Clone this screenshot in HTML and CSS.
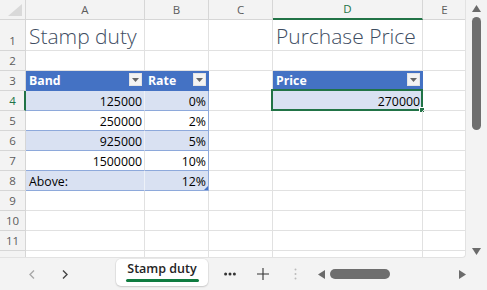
FILE: index.html
```html
<!DOCTYPE html>
<html>
<head>
<meta charset="utf-8">
<link rel="stylesheet" href="styles.css">
</head>
<body>
<div class="app">
  <div class="main">
    <div class="sheet">
      <div class="grid">
        <div class="c h corner"><svg width="14" height="12" viewBox="0 0 14 12"><polygon points="14,0 14,12 0,12" fill="#d9d9d9"/></svg></div>
        <div class="c h">A</div>
        <div class="c h">B</div>
        <div class="c h">C</div>
        <div class="c h sel-col">D</div>
        <div class="c h">E</div>

        <div class="c rh">1</div>
        <div class="c title">Stamp duty</div>
        <div class="c"></div>
        <div class="c"></div>
        <div class="c title">Purchase Price</div>
        <div class="c"></div>

        <div class="c rh">2</div>
        <div class="c"></div><div class="c"></div><div class="c"></div><div class="c"></div><div class="c"></div>

        <div class="c rh">3</div>
        <div class="c th">Band<span class="dd"><svg width="7" height="4" viewBox="0 0 7 4"><polygon points="0,0 7,0 3.5,4" fill="#666"/></svg></span></div>
        <div class="c th">Rate<span class="dd"><svg width="7" height="4" viewBox="0 0 7 4"><polygon points="0,0 7,0 3.5,4" fill="#666"/></svg></span></div>
        <div class="c"></div>
        <div class="c th">Price<span class="dd"><svg width="7" height="4" viewBox="0 0 7 4"><polygon points="0,0 7,0 3.5,4" fill="#666"/></svg></span></div>
        <div class="c"></div>

        <div class="c rh sel-row">4</div>
        <div class="c td band tA num">125000</div>
        <div class="c td band tB num">0%</div>
        <div class="c"></div>
        <div class="c td band tB num">270000<span class="selbox"><span class="handle"></span></span></div>
        <div class="c"></div>

        <div class="c rh">5</div>
        <div class="c td tA num">250000</div>
        <div class="c td tB num">2%</div>
        <div class="c"></div><div class="c"></div><div class="c"></div>

        <div class="c rh">6</div>
        <div class="c td band tA num">925000</div>
        <div class="c td band tB num">5%</div>
        <div class="c"></div><div class="c"></div><div class="c"></div>

        <div class="c rh">7</div>
        <div class="c td tA num">1500000</div>
        <div class="c td tB num">10%</div>
        <div class="c"></div><div class="c"></div><div class="c"></div>

        <div class="c rh">8</div>
        <div class="c td band tA">Above:</div>
        <div class="c td band tB num">12%<span class="resize"></span></div>
        <div class="c"></div><div class="c"></div><div class="c"></div>

        <div class="c rh">9</div>
        <div class="c"></div><div class="c"></div><div class="c"></div><div class="c"></div><div class="c"></div>
        <div class="c rh">10</div>
        <div class="c"></div><div class="c"></div><div class="c"></div><div class="c"></div><div class="c"></div>
        <div class="c rh">11</div>
        <div class="c"></div><div class="c"></div><div class="c"></div><div class="c"></div><div class="c"></div>
        <div class="c rh">12</div>
        <div class="c"></div><div class="c"></div><div class="c"></div><div class="c"></div><div class="c"></div>
      </div>
    </div>
    <div class="vscroll">
      <svg class="vup" width="9" height="7" viewBox="0 0 9 7"><polygon points="4.5,0 9,7 0,7" fill="#6b6b6b"/></svg>
      <div class="vthumb"></div>
      <svg class="vdown" width="9" height="7" viewBox="0 0 9 7"><polygon points="0,0 9,0 4.5,7" fill="#6b6b6b"/></svg>
    </div>
  </div>
  <div class="tabbar">
    <svg class="chev-l" width="6" height="9" viewBox="0 0 6 9"><polyline points="5,0.5 1,4.5 5,8.5" fill="none" stroke="#a8a8a8" stroke-width="1.4"/></svg>
    <svg class="chev-r" width="6" height="9" viewBox="0 0 6 9"><polyline points="1,0.5 5,4.5 1,8.5" fill="none" stroke="#444" stroke-width="1.4"/></svg>
    <div class="tab"><span class="tabname">Stamp duty</span><span class="tabline"></span></div>
    <svg class="more" width="12" height="4" viewBox="0 0 12 4"><circle cx="1.6" cy="2" r="1.5" fill="#333"/><circle cx="6" cy="2" r="1.5" fill="#333"/><circle cx="10.4" cy="2" r="1.5" fill="#333"/></svg>
    <svg class="plus" width="12" height="12" viewBox="0 0 12 12"><path d="M6 0V12M0 6H12" stroke="#333" stroke-width="1.1"/></svg>
    <svg class="vdots" width="3" height="12" viewBox="0 0 3 12"><circle cx="1.5" cy="1.5" r="1" fill="#bbb"/><circle cx="1.5" cy="6" r="1" fill="#bbb"/><circle cx="1.5" cy="10.5" r="1" fill="#bbb"/></svg>
    <svg class="hleft" width="7" height="9" viewBox="0 0 7 9"><polygon points="7,0 7,9 0,4.5" fill="#6b6b6b"/></svg>
    <div class="hthumb"></div>
    <svg class="hright" width="7" height="9" viewBox="0 0 7 9"><polygon points="0,0 7,4.5 0,9" fill="#6b6b6b"/></svg>
  </div>
</div>
</body>
</html>
```

FILE: styles.css
```css
* { box-sizing: border-box; }
html, body { margin: 0; padding: 0; }
body {
  background: #f3f3f3;
  font-family: "Open Sans", "Noto Sans", sans-serif;
}
.app {
  width: 487px;
  height: 290px;
  display: flex;
  flex-direction: column;
  overflow: hidden;
}
.main {
  display: flex;
  height: 258px;
  flex: none;
}
.sheet {
  width: 466px;
  height: 258px;
  flex: none;
  overflow: hidden;
  background: #fff;
  border-right: 1px solid #e2e2e2;
  border-bottom: 1px solid #e2e2e2;
  border-bottom-right-radius: 4px;
}
.grid {
  display: grid;
  grid-template-columns: 26px 119px 64px 64px 150px 44px;
  grid-template-rows: 20px 31px repeat(11, 20px);
}
.c {
  border-right: 1px solid #e1e1e1;
  border-bottom: 1px solid #e1e1e1;
  display: flex;
  align-items: flex-end;
  padding: 0 2px 0 3px;
  font-size: 12.3px;
  line-height: 16px;
  color: #000;
  white-space: nowrap;
  position: relative;
  min-width: 0;
}
.h {
  background: #f3f3f3;
  color: #5c5c5c;
  justify-content: center;
  align-items: center;
  font-size: 11.5px;
  border-color: #d6d6d6;
  padding: 0;
}
.corner {
  justify-content: flex-end;
  align-items: flex-end;
  padding: 0 3px 3px 0;
}
.corner svg { display: block; }
.sel-col {
  color: #217346;
  border-bottom: 2px solid #217346;
}
.rh {
  background: #f3f3f3;
  color: #5c5c5c;
  justify-content: center;
  font-size: 11.5px;
  border-color: #d6d6d6;
  padding: 0 0 1px;
}
.sel-row {
  color: #217346;
  border-right: 2px solid #217346;
  padding-left: 1px;
}
.title {
  font-size: 21px;
  font-weight: 300;
  color: #3e4d62;
  line-height: normal;
  padding-left: 3px;
}
.th {
  background: #4472c4;
  color: #fff;
  font-weight: 700;
  justify-content: space-between;
  align-items: center;
  border-right-color: #4472c4;
  border-bottom-color: #4472c4;
  padding: 0 2px 0 3px;
}
.dd {
  width: 13px;
  height: 13px;
  background: #f3f3f3;
  border: 1px solid #e4e4e4;
  display: flex;
  align-items: center;
  justify-content: center;
  margin-bottom: 2px;
}
.dd svg { display: block; }
.td { border-bottom-color: #8ea9db; }
.band { background: #d9e1f2; }
.tA { border-right-color: #e1e1e1; }
.band.tA { border-right-color: #edf1f8; }
.tB { border-right-color: #8ea9db; }
.num { justify-content: flex-end; }
.selbox {
  position: absolute;
  top: -2px;
  left: -2px;
  right: -1px;
  bottom: -1px;
  border: 2px solid #217346;
}
.handle {
  position: absolute;
  right: -4px;
  bottom: -4px;
  width: 6px;
  height: 6px;
  background: #217346;
  border: 1px solid #fff;
}
.resize {
  position: absolute;
  right: 0;
  bottom: 0;
  width: 0;
  height: 0;
  border-left: 4px solid transparent;
  border-bottom: 4px solid #4472c4;
}
.vscroll {
  width: 21px;
  flex: none;
  display: flex;
  flex-direction: column;
  align-items: center;
  padding: 5px 0 3px;
}
.vscroll svg { display: block; }
.vthumb {
  width: 9px;
  height: 113px;
  margin-top: 5px;
  border-radius: 5px;
  background: #6e6e6e;
}
.vdown { margin-top: auto; }
.tabbar {
  height: 32px;
  flex: none;
  display: flex;
  align-items: center;
}
.tabbar svg { display: block; flex: none; }
.chev-l { margin-left: 29px; }
.chev-r { margin-left: 27px; }
.tab {
  margin-left: 48px;
  align-self: flex-start;
  margin-top: 1px;
  width: 92px;
  height: 27px;
  background: #fff;
  border-radius: 5px;
  box-shadow: 0 1px 2px rgba(0,0,0,0.14), 0 0 0 1px rgba(0,0,0,0.04);
  display: flex;
  flex-direction: column;
  align-items: center;
  padding-top: 2px;
}
.tabname {
  font-size: 12.5px;
  font-weight: 600;
  color: #242424;
  line-height: 16px;
}
.tabline {
  width: 73px;
  height: 2.5px;
  margin-top: 2px;
  border-radius: 2px;
  background: #107c41;
}
.more { margin-left: 16px; }
.plus { margin-left: 21px; }
.vdots { margin-left: 25px; }
.hleft { margin-left: 21px; }
.hthumb {
  margin-left: 5px;
  width: 60px;
  height: 10px;
  border-radius: 5px;
  background: #6e6e6e;
  flex: none;
}
.hright { margin-left: 69px; }
```
